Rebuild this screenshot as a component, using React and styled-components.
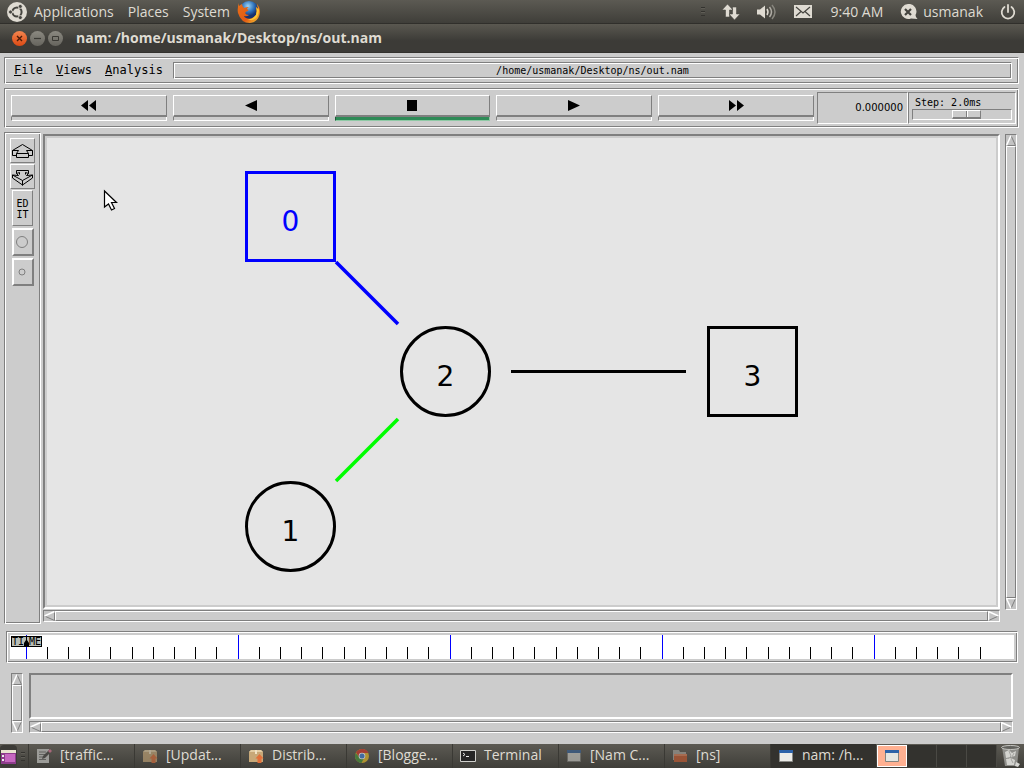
import React from "react";
import styled, { createGlobalStyle, css } from "styled-components";

const App = () => {
  return (
    <Desktop>
      <GlobalStyle />
      <TopPanel />
      <TitleBar>
        <WindowButtons>
          <WindowButton $close aria-label="Close">
            <svg width="15" height="15">
              <path d="M5 5l5 5M10 5l-5 5" stroke="#4a1c0a" strokeWidth="1.4" />
            </svg>
          </WindowButton>
          <WindowButton aria-label="Minimize">
            <svg width="15" height="15">
              <path d="M4 7.5h7" stroke="#3a3934" strokeWidth="1.2" />
            </svg>
          </WindowButton>
          <WindowButton aria-label="Maximize">
            <svg width="15" height="15">
              <path d="M4.5 5.5h6v4h-6z" fill="none" stroke="#3a3934" />
            </svg>
          </WindowButton>
        </WindowButtons>
        <Title>nam: /home/usmanak/Desktop/ns/out.nam</Title>
      </TitleBar>
      <Workspace>
        <MenuFrame>
          <Menus>
            <MenuButton>
              <u>F</u>ile
            </MenuButton>
            <MenuButton>
              <u>V</u>iews
            </MenuButton>
            <MenuButton>
              <u>A</u>nalysis
            </MenuButton>
          </Menus>
          <PathBox>/home/usmanak/Desktop/ns/out.nam</PathBox>
        </MenuFrame>
        <Controls />
        <Body>
          <Tools />
          <CanvasColumn>
            <Canvas>
              <Network />
            </Canvas>
            <HScroll />
          </CanvasColumn>
          <VScroll />
        </Body>
        <Timeline />
        <Annotations>
          <VScroll />
          <AnnotationColumn>
            <AnnotationBox />
            <HScroll />
          </AnnotationColumn>
        </Annotations>
      </Workspace>
      <Taskbar />
    </Desktop>
  );
};

export default App;

const TopPanel = () => (
  <Panel>
    <UbuntuLogo />
    <PanelMenus>
      <PanelButton>Applications</PanelButton>
      <PanelButton>Places</PanelButton>
      <PanelButton>System</PanelButton>
    </PanelMenus>
    <Firefox />
    <Tray>
      <Grip />
      <svg width="18" height="18" fill="#dfdbd2">
        <path d="M5.5 1L11 7H7.5v7h-4V7H0zM10.500 4h4v7H18l-5.500 6L7 11h3.500z" stroke="#4b4a44" strokeWidth="0.6" />
      </svg>
      <svg width="20" height="18" fill="none" stroke="#dfdbd2" strokeWidth="1.5">
        <path d="M0 6.5h3l5-4v13l-5-4H0z" fill="#dfdbd2" stroke="none" />
        <path d="M10 6q2 3 0 6" />
        <path d="M12.500 4q4 5 0 10" stroke="#b0ada5" />
        <path d="M15 2q6 7 0 14" stroke="#87857d" />
      </svg>
      <svg width="18" height="13">
        <path d="M0 0h18v13H0z" fill="#dfdbd2" />
        <path d="M2 2l7 6 7-6M2 11l5-4.5M16 11l-5-4.5" fill="none" stroke="#45443f" strokeWidth="1.2" />
      </svg>
      <Clock>9:40 AM</Clock>
      <UserButton>
        <svg width="18" height="16">
          <path d="M8 0a7.500 7.500 0 1 0 3 14.500L17.500 15q-2-2-2-4A7.500 7.500 0 0 0 8 0z" fill="#dfdbd2" />
          <path d="M5 5l6 6M11 5l-6 6" stroke="#45443f" strokeWidth="2.2" />
        </svg>
        usmanak
      </UserButton>
      <svg width="16" height="16" fill="none" stroke="#dfdbd2" strokeWidth="1.8" strokeLinecap="round">
        <path d="M4.500 3a6.300 6.300 0 1 0 7 0M8 1v7" />
      </svg>
    </Tray>
  </Panel>
);

const UbuntuLogo = () => (
  <svg width="20" height="20" viewBox="0 0 20 20">
    <circle cx="10" cy="10" r="10" fill="#dfdbd2" />
    <circle cx="10" cy="10" r="4.6" fill="none" stroke="#45443f" strokeWidth="2" />
    <path d="M10 10L1 10M10 10l4.500-8M10 10l4.500 8" stroke="#dfdbd2" strokeWidth="1.3" />
    <g fill="#45443f" stroke="#dfdbd2" strokeWidth="0.8">
      <circle cx="3.5" cy="10" r="2" />
      <circle cx="13.3" cy="4.4" r="2" />
      <circle cx="13.3" cy="15.6" r="2" />
    </g>
  </svg>
);

const Firefox = () => (
  <svg width="24" height="24" viewBox="0 0 24 24">
    <defs>
      <radialGradient id="globe" cx="45%" cy="25%">
        <stop offset="0" stopColor="#9bd5f5" />
        <stop offset="0.6" stopColor="#2f73bd" />
        <stop offset="1" stopColor="#17326e" />
      </radialGradient>
      <linearGradient id="fox" x1="0" x2="1" y2="1">
        <stop offset="0" stopColor="#e8701a" />
        <stop offset="0.6" stopColor="#e25a12" />
        <stop offset="1" stopColor="#fbd53a" />
      </linearGradient>
    </defs>
    <circle cx="12" cy="11" r="10" fill="url(#globe)" />
    <path d="M2 3q-2 5-1 10 3 10 12 10 9-1 10-11 0-5-3-8 1 3 1 5l-2-2q2 7-2 10-4 3-8 1-2-1-2-2 3 1 5-1-3 0-4-2 1-2 3-2 1-1-1-2 0-1 2-2-3 0-5 1-2-2-2-4-2 1-3 2z" fill="url(#fox)" />
    <path d="M20 4q1 3 1 5l-2-2q2 7-2 10-3 3-7 2 6 3 10-2 4-6 0-13z" fill="#fbc834" />
  </svg>
);

const playButtons = [
  { name: "Rewind", d: "M7 0v11L0 5.5zM15 0v11L8 5.5z", width: 15 },
  { name: "Play backward", d: "M12 0v11L0 5.5z", width: 12 },
  { name: "Stop", d: "M0 0h10v11H0z", width: 10, active: true },
  { name: "Play", d: "M0 0v11l12-5.5z", width: 12 },
  { name: "Fast forward", d: "M0 0v11l7-5.5zM8 0v11l7-5.5z", width: 15 },
];

const Controls = () => (
  <ControlFrame>
    <PlayButtons>
      {playButtons.map((button) => (
        <PlayButton key={button.name} aria-label={button.name}>
          <PlayFace>
            <svg width={button.width} height="11">
              <path d={button.d} />
            </svg>
          </PlayFace>
          <PlayLamp $on={button.active} />
        </PlayButton>
      ))}
    </PlayButtons>
    <TimeBox>0.000000</TimeBox>
    <StepBox>
      <label htmlFor="step">Step: 2.0ms</label>
      <StepSlider id="step" type="range" min="0" max="100" defaultValue="56" />
    </StepBox>
  </ControlFrame>
);

const Tools = () => (
  <ToolFrame>
    <ToolButton aria-label="Zoom in">
      <svg width="21" height="15" fill="none" stroke="#000">
        <path d="M.5 6.500l10-6 10 6v5h-4M.5 6.500v5h4M.5 6.500h6l-2 3h12l-2-3h6M4.500 9.500v4h12v-4" />
      </svg>
    </ToolButton>
    <ToolButton aria-label="Zoom out">
      <svg width="21" height="16" fill="none" stroke="#000">
        <path d="M4.500 3.500v-3h12v3l-2 2 6-.5v3l-10 7-10-7v-3l6 .5zM.5 5l10 5.500L20.500 5M10.500 10.500v5M4.500 3.500l3-1v2M16.500 3.500l-3-1v2" />
      </svg>
    </ToolButton>
    <EditButton>
      ED
      <br />
      IT
    </EditButton>
    <SizeButton aria-label="Bigger nodes">
      <svg width="13" height="13" fill="none" stroke="#7f7f7f">
        <circle cx="6" cy="6" r="5.5" />
      </svg>
    </SizeButton>
    <SizeButton aria-label="Smaller nodes">
      <svg width="13" height="13" fill="none" stroke="#7f7f7f">
        <circle cx="6" cy="6" r="3" />
      </svg>
    </SizeButton>
  </ToolFrame>
);

const nodes = [
  { id: 0, x: 243.5, y: 78.5, color: "#0000ff", box: true },
  { id: 1, x: 243.5, y: 388.5, color: "#000" },
  { id: 2, x: 398.5, y: 233.5, color: "#000" },
  { id: 3, x: 705.5, y: 233.5, color: "#000", box: true },
];

const Network = () => (
  <svg width="100%" height="100%" fill="none" strokeWidth="3">
    <path d="M289 124l62 62" stroke="#0000ff" strokeWidth="3.5" />
    <path d="M289 343l62-62" stroke="#00ff00" strokeWidth="3.5" />
    <path d="M464 233.5h175" stroke="#000" />
    {nodes.map((node) => (
      <g key={node.id} stroke={node.color}>
        {node.box ? (
          <rect x={node.x - 44} y={node.y - 44} width="88" height="88" />
        ) : (
          <circle cx={node.x} cy={node.y} r="44" />
        )}
        <NodeLabel x={node.x} y={node.y + 14} fill={node.color}>
          {node.id}
        </NodeLabel>
      </g>
    ))}
    <path
      d="M57.5 53v16l4-3 3 6 3-1.5-3-6h5z"
      fill="#fff"
      stroke="#000"
      strokeWidth="1.2"
    />
  </svg>
);

const HScroll = () => (
  <HTrough>
    <ArrowButton aria-label="Scroll left">
      <svg width="11" height="10" fill="none">
        <path d="M10.5 .5v9L.5 5" stroke="#7f7f7f" />
        <path d="M.5 5l10-4.5" stroke="#fff" strokeWidth="1.5" />
      </svg>
    </ArrowButton>
    <Thumb />
    <ArrowButton aria-label="Scroll right">
      <svg width="11" height="10" fill="none">
        <path d="M.5 9.5l10-4.5" stroke="#7f7f7f" />
        <path d="M.5 9.5v-9l10 4.5" stroke="#fff" strokeWidth="1.5" />
      </svg>
    </ArrowButton>
  </HTrough>
);

const VScroll = () => (
  <VTrough>
    <ArrowButton aria-label="Scroll up">
      <svg width="10" height="11" fill="none">
        <path d="M5 .5l4.5 10h-9" stroke="#7f7f7f" />
        <path d="M.5 10.5L5 .5" stroke="#fff" strokeWidth="1.5" />
      </svg>
    </ArrowButton>
    <Thumb />
    <ArrowButton aria-label="Scroll down">
      <svg width="10" height="11" fill="none">
        <path d="M9.5 .5L5 10.5" stroke="#7f7f7f" />
        <path d="M9.5 .5h-9l4.5 10" stroke="#fff" strokeWidth="1.5" />
      </svg>
    </ArrowButton>
  </VTrough>
);

const ticks = Array.from({ length: 46 }, (_, i) => i);

const Timeline = () => (
  <TimelineFrame>
    <TimelineRuler>
      <svg width="100%" height="24" shapeRendering="crispEdges">
        {ticks.map((i) => (
          <rect
            key={i}
            x={16 + Math.floor(i * 21.2)}
            y={i % 10 === 0 ? 0 : 12}
            width="1"
            height="24"
            fill={i % 10 === 0 ? "#0000ff" : "#000"}
          />
        ))}
      </svg>
      <TimeMarker>
        TI
        <svg width="5" height="9">
          <path d="M2 0h1v3l2 3v3H0V6l2-3z" />
        </svg>
        ME
      </TimeMarker>
    </TimelineRuler>
  </TimelineFrame>
);

const WindowIcon = ({ dim }) => (
  <svg width="16" height="16" opacity={dim ? 0.5 : 1}>
    <path d="M1.5 3.5h13v10h-13z" fill="#ecece8" stroke="#8a8a86" />
    <path d="M1 2h14v3H1z" fill="#2d62a8" />
  </svg>
);

const BoxIcon = ({ dim }) => (
  <svg width="16" height="16" opacity={dim ? 0.6 : 1}>
    <path d="M1 4l2-2h10l2 2v10H1z" fill="#c8a878" />
    <path d="M1 4l2-2h10l2 2z" fill="#e3cda4" />
    <path d="M7 2h2v4H7z" fill="#f1e2c4" />
    <path d="M11.5 6l4 4.5h-2V15H9.500v-4.500h-2z" fill="#e2703a" />
  </svg>
);

const EditorIcon = () => (
  <svg width="16" height="16">
    <path d="M1 1h12v14H1z" fill="#9c9c98" />
    <path d="M3 4h7M3 6.5h6M3 9h4M3 11.5h7" stroke="#62625e" />
    <path d="M6 11l1-3 6-6 2 2-6 6z" fill="#4a4945" />
    <path d="M12 3l2-2 2 2-2 2z" fill="#a8687a" />
  </svg>
);

const ChromeIcon = () => (
  <svg width="16" height="16" opacity="0.8">
    <circle cx="8" cy="8" r="7" fill="#c9a52e" />
    <path d="M2 4.500A7 7 0 0 1 14.500 5H8L5 9z" fill="#b8392e" />
    <path d="M1.700 5A7 7 0 0 0 7.500 15L10 10l-5-1z" fill="#47853c" />
    <circle cx="8" cy="8" r="3.3" fill="#e4e4e4" />
    <circle cx="8" cy="8" r="2.5" fill="#3f73b8" />
  </svg>
);

const TerminalIcon = () => (
  <svg width="16" height="16">
    <path d="M.5 2.5h15v11H.5z" fill="#262626" stroke="#d0d0cc" />
    <path d="M3 5l2 1.500L3 8M6 8.500h3" fill="none" stroke="#e8e8e8" />
  </svg>
);

const FolderIcon = () => (
  <svg width="16" height="16">
    <path d="M1 2h6l1 2h6v8H1z" fill="#85827b" />
    <path d="M2 6h13v8H2z" fill="#985336" />
    <path d="M2 6h13v2H2z" fill="#a56b50" />
  </svg>
);

const tasks = [
  { text: "[traffic...", icon: <EditorIcon /> },
  { text: "[Updat...", icon: <BoxIcon dim /> },
  { text: "Distrib...", icon: <BoxIcon /> },
  { text: "[Blogge...", icon: <ChromeIcon /> },
  { text: "Terminal", icon: <TerminalIcon /> },
  { text: "[Nam C...", icon: <WindowIcon dim /> },
  { text: "[ns]", icon: <FolderIcon /> },
  { text: "nam: /h...", icon: <WindowIcon />, active: true },
];

const Taskbar = () => (
  <TaskPanel>
    <ShowDesktop aria-label="Show desktop">
      <svg width="18" height="22">
        <rect x="0" y="0" width="17" height="22" rx="4" fill="#3c3b37" />
        <path d="M1 5h15v14H1z" fill="#8e3c8c" />
        <path d="M5 9h10v8H5z" fill="#c667c0" />
        <path d="M1 5h15v3H1z" fill="#e9e4d0" />
        <path d="M2 10h2v2H2zM2 14h2v2H2z" fill="#eee" />
      </svg>
    </ShowDesktop>
    <Grip />
    <TaskList>
      {tasks.map((task) => (
        <TaskButton key={task.text} $active={task.active}>
          {task.icon}
          <TaskName>{task.text}</TaskName>
        </TaskButton>
      ))}
    </TaskList>
    <Pager>
      <PagerCell $active aria-label="Workspace 1">
        <svg width="14" height="12">
          <path d="M.5 .5h13v11H.5z" fill="#e6e6e2" stroke="#858580" />
          <path d="M0 0h14v3H0z" fill="#2d62a8" />
        </svg>
      </PagerCell>
      <PagerCell aria-label="Workspace 2" />
      <PagerCell aria-label="Workspace 3" />
      <PagerCell aria-label="Workspace 4" />
    </Pager>
    <TrashButton aria-label="Trash">
      <svg width="20" height="22">
        <path d="M1 2h17l-2 19H4z" fill="#8e8e8a" />
        <ellipse cx="9.5" cy="2.5" rx="9" ry="2" fill="#62625e" stroke="#c4c4c0" />
        <path d="M4 7l4-2 3 3 4-2-1 5-4 1-5 1zM5 14l5-1 4 2-1 5H6z" fill="#d4d4d0" />
        <path d="M8 6l2 5-3 3M13 8l-3 6 2 4" fill="none" stroke="#a4a4a0" />
        <path d="M15 17l4 2-2 3-3-1z" fill="#d8d8d4" />
      </svg>
    </TrashButton>
  </TaskPanel>
);

const GlobalStyle = createGlobalStyle`
  * {
    box-sizing: border-box;
  }

  body {
    margin: 0;
    background-color: #cccccc;
  }

  button {
    margin: 0;
    padding: 0;
    border: 0;
    background: none;
    color: inherit;
    font: inherit;
  }

  svg {
    display: block;
    flex-shrink: 0;
  }
`;

const groove = css`
  border: 1px solid;
  border-color: #7f7f7f #ffffff #ffffff #7f7f7f;
  box-shadow: inset 1px 1px 0 #ffffff, inset -1px -1px 0 #7f7f7f;
`;

const raised = css`
  border: 1px solid;
  border-color: #ffffff #7f7f7f #7f7f7f #ffffff;
`;

const sunken = css`
  border: 1px solid;
  border-color: #7f7f7f #ffffff #ffffff #7f7f7f;
`;

const Desktop = styled.div`
  display: flex;
  flex-direction: column;
  min-height: 100vh;
  font-family: "DejaVu Sans Mono", monospace;
  font-size: 10px;
  color: #000000;
`;

const Panel = styled.header`
  display: flex;
  align-items: center;
  height: 24px;
  padding: 0 8px 0 7px;
  background: linear-gradient(#5c5a53, #3f3e39);
  border-bottom: 1px solid #302f2b;
  color: #dfdbd2;
  font-family: "Open Sans", "Noto Sans", sans-serif;
  font-size: 14px;
`;

const PanelMenus = styled.nav`
  display: flex;
  gap: 14px;
  padding: 0 7px;
`;

const PanelButton = styled.button`
  line-height: 20px;
`;

const Tray = styled.div`
  display: flex;
  align-items: center;
  gap: 17px;
  margin-left: auto;
`;

const Grip = styled.div`
  width: 4px;
  height: 9px;
  background: repeating-linear-gradient(#34332f 0 1px, #5f5d56 1px 2px, transparent 2px 4px);
`;

const Clock = styled.time`
  padding-left: 2px;
  white-space: nowrap;
`;

const UserButton = styled.button`
  display: flex;
  align-items: center;
  gap: 5px;
`;

const TitleBar = styled.div`
  display: flex;
  align-items: center;
  gap: 13px;
  height: 29px;
  padding-left: 12px;
  background: linear-gradient(#5a5850, #3c3b37 60%);
  border-bottom: 1px solid #33322e;
  color: #dfdbd2;
  font-family: "Open Sans", "Noto Sans", sans-serif;
`;

const WindowButtons = styled.div`
  display: flex;
  gap: 3px;
`;

const WindowButton = styled.button`
  width: 15px;
  height: 15px;
  border-radius: 50%;
  background: ${({ $close }) =>
    $close
      ? "linear-gradient(#f4854f, #dc4a14)"
      : "linear-gradient(#8b8981, #66645d)"};
`;

const Title = styled.h1`
  margin: 0;
  font-size: 14px;
  font-weight: 700;
  line-height: 20px;
`;

const Workspace = styled.main`
  display: flex;
  flex: 1;
  flex-direction: column;
  gap: 4px;
  padding: 4px 5px 11px 4px;
  background-color: #cccccc;
`;

const MenuFrame = styled.section`
  ${groove}
  display: flex;
  align-items: center;
  gap: 10px;
  height: 27px;
  padding: 0 6px 0 9px;
`;

const Menus = styled.nav`
  display: flex;
  gap: 13px;
`;

const MenuButton = styled.button`
  font-size: 12px;
  line-height: 15px;
`;

const PathBox = styled.div`
  ${groove}
  flex: 1;
  height: 17px;
  line-height: 15px;
  text-align: center;
`;

const ControlFrame = styled.section`
  ${groove}
  display: flex;
  height: 40px;
  padding: 3px 2px 3px 6px;
`;

const PlayButtons = styled.div`
  display: flex;
  flex: 1;
  gap: 6px;
  padding: 3px 3px 3px 0;
`;

const PlayButton = styled.button`
  display: flex;
  flex: 1;
  flex-direction: column;
`;

const PlayFace = styled.span`
  ${raised}
  border-bottom-width: 2px;
  display: flex;
  align-items: center;
  justify-content: center;
  align-self: stretch;
  height: 22px;
`;

const PlayLamp = styled.span`
  align-self: stretch;
  height: 4px;
  border: solid;
  border-width: 0 1px 1px;
  border-color: #ffffff #ffffff #ffffff #7f7f7f;
  ${({ $on }) =>
    $on &&
    css`
      background-color: #2e8b57;
      border-color: #8fc9a5 #8fc9a5 #8fc9a5 #1d5a38;
    `}
`;

const TimeBox = styled.output`
  ${sunken}
  width: 91px;
  padding-right: 4px;
  font-family: "DejaVu Sans", sans-serif;
  line-height: 30px;
  text-align: right;
`;

const StepBox = styled.div`
  ${sunken}
  display: flex;
  flex-direction: column;
  width: 108px;
  padding: 3px;

  label {
    padding: 1px 0 0 3px;
    line-height: 12px;
  }
`;

const StepSlider = styled.input`
  ${sunken}
  appearance: none;
  width: 100%;
  height: 11px;
  margin: 0;
  background: none;

  &::-webkit-slider-thumb {
    ${raised}
    appearance: none;
    width: 29px;
    height: 9px;
    background: linear-gradient(
      90deg,
      #cccccc 13px,
      #7f7f7f 13px 14px,
      #ffffff 14px 15px,
      #cccccc 15px
    );
    border-bottom-width: 2px;
  }
`;

const Body = styled.section`
  display: flex;
  flex: 1;
`;

const ToolFrame = styled.aside`
  ${groove}
  display: flex;
  flex-direction: column;
  align-items: center;
  gap: 1px;
  width: 37px;
  padding-top: 5px;
`;

const ToolButton = styled.button`
  ${raised}
  display: flex;
  align-items: center;
  justify-content: center;
  width: 25px;
  height: 25px;
  padding-top: 2px;
`;

const EditButton = styled.button`
  ${raised}
  width: 21px;
  height: 36px;
  padding-top: 2px;
  font-size: 10px;
  line-height: 11px;
`;

const SizeButton = styled.button`
  ${raised}
  border-width: 2px;
  display: flex;
  align-items: center;
  justify-content: center;
  width: 22px;
  height: 28px;
  margin-top: 1px;
`;

const CanvasColumn = styled.div`
  display: flex;
  flex: 1;
  flex-direction: column;
  gap: 1px;
  padding: 2px 5px 2px 2px;
`;

const Canvas = styled.div`
  ${sunken}
  border-width: 2px;
  display: flex;
  flex: 1;
  background-color: #e5e5e5;
  outline: 2px solid #cccccc;
  outline-offset: -4px;
  padding: 2px;
`;

const NodeLabel = styled.text`
  font-family: "DejaVu Sans", sans-serif;
  font-size: 28px;
  stroke: none;
  text-anchor: middle;
`;

const HTrough = styled.div`
  ${sunken}
  display: flex;
  height: 12px;
`;

const VTrough = styled.div`
  ${sunken}
  display: flex;
  flex-direction: column;
  width: 12px;

  ${Body} & {
    margin: 2px 2px 14px 0;
  }
`;

const ArrowButton = styled.button`
  background-color: #c3c3c3;
`;

const Thumb = styled.div`
  ${raised}
  flex: 1;
`;

const TimelineFrame = styled.section`
  ${groove}
  height: 32px;
  margin: 3px 1px 6px 2px;
  padding: 3px;
`;

const TimelineRuler = styled.div`
  position: relative;
  height: 24px;
  background-color: #ffffff;
`;

const TimeMarker = styled.div`
  position: absolute;
  top: 1px;
  left: 1px;
  display: flex;
  align-items: center;
  height: 11px;
  border: 1px solid #000000;
  background-color: #b8bdb5;
  line-height: 9px;
`;

const Annotations = styled.section`
  display: flex;
  gap: 6px;
  height: 60px;
  padding: 0 6px 0 7px;
`;

const AnnotationColumn = styled.div`
  display: flex;
  flex: 1;
  flex-direction: column;
  gap: 2px;
`;

const AnnotationBox = styled.div`
  ${sunken}
  border-width: 2px;
  flex: 1;
`;

const TaskPanel = styled.footer`
  display: flex;
  align-items: center;
  height: 24px;
  background: linear-gradient(#5c5a53, #3f3e39);
  color: #dfdbd2;
  font-family: "Open Sans", "Noto Sans", sans-serif;
  font-size: 14px;
`;

const ShowDesktop = styled.button`
  width: 21px;
`;

const TaskList = styled.div`
  display: flex;
  flex: 1;
  height: 24px;
  margin-left: 3px;
`;

const TaskButton = styled.button`
  display: flex;
  flex: 1;
  align-items: center;
  gap: 8px;
  min-width: 0;
  padding-left: 7px;
  border-left: 1px solid #3a3934;
  background-color: ${({ $active }) => ($active ? "#33322e" : "transparent")};
  white-space: nowrap;
`;

const TaskName = styled.span`
  padding-bottom: 2px;
  line-height: 20px;
`;

const Pager = styled.div`
  display: flex;
  height: 22px;
  margin: 0 4px 0 1px;
`;

const PagerCell = styled.button`
  display: flex;
  align-items: center;
  justify-content: center;
  width: 30px;
  background-color: ${({ $active }) => ($active ? "#ffb091" : "#33322e")};
  border: ${({ $active }) => ($active ? "1px solid #ffffff" : "0")};
  border-right: 1px solid ${({ $active }) => ($active ? "#ffffff" : "#4a4944")};
`;

const TrashButton = styled.button`
  width: 23px;
`;
